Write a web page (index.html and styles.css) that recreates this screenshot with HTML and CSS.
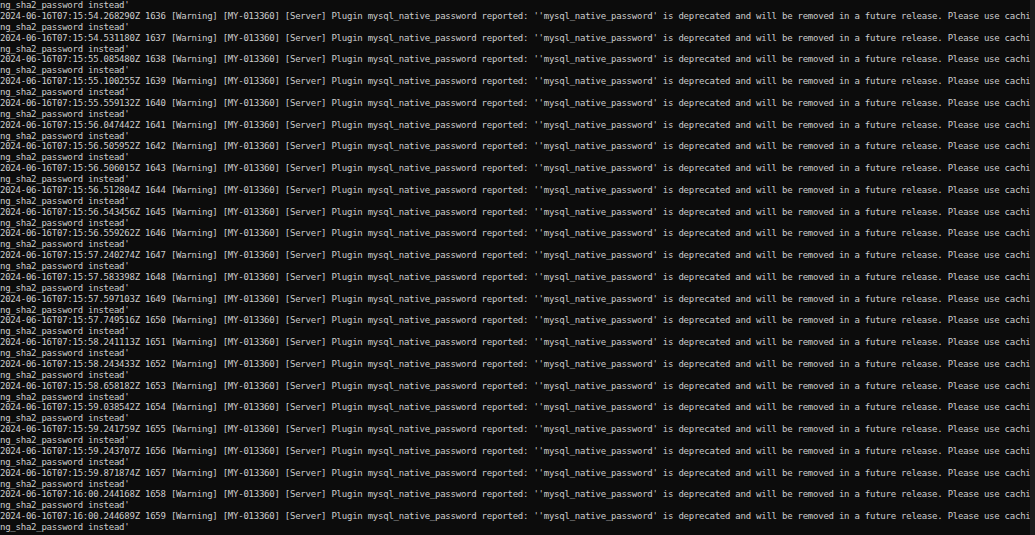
FILE: index.html
```html
<!DOCTYPE html>
<html lang="en">
<head>
  <meta charset="UTF-8">
  <meta name="viewport" content="width=device-width, initial-scale=1.0">
  <title>mysql log</title>
  <link rel="stylesheet" href="styles.css">
</head>
<body>
  <div class="terminal">
    <pre class="log">ng_sha2_password instead'
2024-06-16T07:15:54.268290Z 1636 [Warning] [MY-013360] [Server] Plugin mysql_native_password reported: ''mysql_native_password' is deprecated and will be removed in a future release. Please use cachi
ng_sha2_password instead'
2024-06-16T07:15:54.531180Z 1637 [Warning] [MY-013360] [Server] Plugin mysql_native_password reported: ''mysql_native_password' is deprecated and will be removed in a future release. Please use cachi
ng_sha2_password instead'
2024-06-16T07:15:55.085480Z 1638 [Warning] [MY-013360] [Server] Plugin mysql_native_password reported: ''mysql_native_password' is deprecated and will be removed in a future release. Please use cachi
ng_sha2_password instead'
2024-06-16T07:15:55.100255Z 1639 [Warning] [MY-013360] [Server] Plugin mysql_native_password reported: ''mysql_native_password' is deprecated and will be removed in a future release. Please use cachi
ng_sha2_password instead'
2024-06-16T07:15:55.559132Z 1640 [Warning] [MY-013360] [Server] Plugin mysql_native_password reported: ''mysql_native_password' is deprecated and will be removed in a future release. Please use cachi
ng_sha2_password instead'
2024-06-16T07:15:56.047442Z 1641 [Warning] [MY-013360] [Server] Plugin mysql_native_password reported: ''mysql_native_password' is deprecated and will be removed in a future release. Please use cachi
ng_sha2_password instead'
2024-06-16T07:15:56.505952Z 1642 [Warning] [MY-013360] [Server] Plugin mysql_native_password reported: ''mysql_native_password' is deprecated and will be removed in a future release. Please use cachi
ng_sha2_password instead'
2024-06-16T07:15:56.506015Z 1643 [Warning] [MY-013360] [Server] Plugin mysql_native_password reported: ''mysql_native_password' is deprecated and will be removed in a future release. Please use cachi
ng_sha2_password instead'
2024-06-16T07:15:56.512804Z 1644 [Warning] [MY-013360] [Server] Plugin mysql_native_password reported: ''mysql_native_password' is deprecated and will be removed in a future release. Please use cachi
ng_sha2_password instead'
2024-06-16T07:15:56.543456Z 1645 [Warning] [MY-013360] [Server] Plugin mysql_native_password reported: ''mysql_native_password' is deprecated and will be removed in a future release. Please use cachi
ng_sha2_password instead'
2024-06-16T07:15:56.559262Z 1646 [Warning] [MY-013360] [Server] Plugin mysql_native_password reported: ''mysql_native_password' is deprecated and will be removed in a future release. Please use cachi
ng_sha2_password instead'
2024-06-16T07:15:57.240274Z 1647 [Warning] [MY-013360] [Server] Plugin mysql_native_password reported: ''mysql_native_password' is deprecated and will be removed in a future release. Please use cachi
ng_sha2_password instead'
2024-06-16T07:15:57.583398Z 1648 [Warning] [MY-013360] [Server] Plugin mysql_native_password reported: ''mysql_native_password' is deprecated and will be removed in a future release. Please use cachi
ng_sha2_password instead'
2024-06-16T07:15:57.597103Z 1649 [Warning] [MY-013360] [Server] Plugin mysql_native_password reported: ''mysql_native_password' is deprecated and will be removed in a future release. Please use cachi
ng_sha2_password instead'
2024-06-16T07:15:57.749516Z 1650 [Warning] [MY-013360] [Server] Plugin mysql_native_password reported: ''mysql_native_password' is deprecated and will be removed in a future release. Please use cachi
ng_sha2_password instead'
2024-06-16T07:15:58.241113Z 1651 [Warning] [MY-013360] [Server] Plugin mysql_native_password reported: ''mysql_native_password' is deprecated and will be removed in a future release. Please use cachi
ng_sha2_password instead'
2024-06-16T07:15:58.243433Z 1652 [Warning] [MY-013360] [Server] Plugin mysql_native_password reported: ''mysql_native_password' is deprecated and will be removed in a future release. Please use cachi
ng_sha2_password instead'
2024-06-16T07:15:58.658182Z 1653 [Warning] [MY-013360] [Server] Plugin mysql_native_password reported: ''mysql_native_password' is deprecated and will be removed in a future release. Please use cachi
ng_sha2_password instead'
2024-06-16T07:15:59.038542Z 1654 [Warning] [MY-013360] [Server] Plugin mysql_native_password reported: ''mysql_native_password' is deprecated and will be removed in a future release. Please use cachi
ng_sha2_password instead'
2024-06-16T07:15:59.241759Z 1655 [Warning] [MY-013360] [Server] Plugin mysql_native_password reported: ''mysql_native_password' is deprecated and will be removed in a future release. Please use cachi
ng_sha2_password instead'
2024-06-16T07:15:59.243707Z 1656 [Warning] [MY-013360] [Server] Plugin mysql_native_password reported: ''mysql_native_password' is deprecated and will be removed in a future release. Please use cachi
ng_sha2_password instead'
2024-06-16T07:15:59.871874Z 1657 [Warning] [MY-013360] [Server] Plugin mysql_native_password reported: ''mysql_native_password' is deprecated and will be removed in a future release. Please use cachi
ng_sha2_password instead'
2024-06-16T07:16:00.244168Z 1658 [Warning] [MY-013360] [Server] Plugin mysql_native_password reported: ''mysql_native_password' is deprecated and will be removed in a future release. Please use cachi
ng_sha2_password instead'
2024-06-16T07:16:00.244689Z 1659 [Warning] [MY-013360] [Server] Plugin mysql_native_password reported: ''mysql_native_password' is deprecated and will be removed in a future release. Please use cachi
ng_sha2_password instead'</pre>
    <div class="scrollbar"></div>
  </div>
</body>
</html>
```

FILE: styles.css
```css
html, body {
  margin: 0;
  height: 100%;
  background: #0c0c0c;
  overflow: hidden;
}
.terminal {
  display: flex;
  height: 535px;
  background: #0c0c0c;
}
.log {
  flex: 1;
  margin: 0;
  padding: 0;
  font-family: "DejaVu Sans Mono", "Liberation Mono", monospace;
  font-size: 9px;
  letter-spacing: -0.24px;
  line-height: 10.87px;
  color: #cccccc;
  white-space: pre;
  overflow: hidden;
}
.scrollbar {
  width: 5px;
  background: #1b1b1b;
}
```
